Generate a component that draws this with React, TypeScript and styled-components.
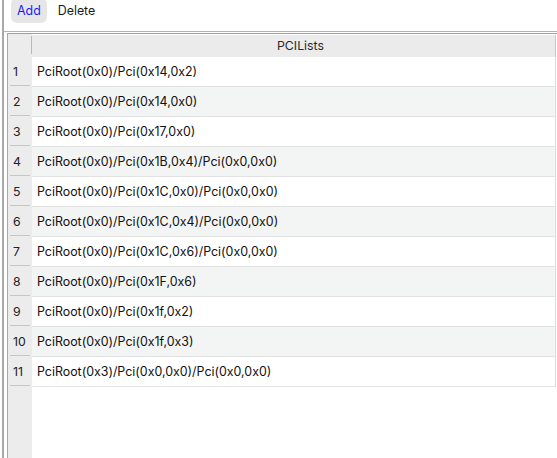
import React from "react";
import styled, { createGlobalStyle } from "styled-components";

const Global = createGlobalStyle`
  html, body { margin: 0; padding: 0; background: #ffffff; }
  body { width: 557px; height: 458px; overflow: hidden; font-family: Inter, "Noto Sans", sans-serif; }
  #root { height: 100%; }
`;

const Page = styled.div`
  height: 458px;
  padding-left: 2px;
  box-sizing: border-box;
`;

const Frame = styled.div`
  height: 100%;
  border-left: 2px solid #a9a9a9;
  display: flex;
  flex-direction: column;
  box-sizing: border-box;
`;

const Toolbar = styled.div`
  height: 32px;
  box-sizing: border-box;
  border-bottom: 1px solid #b4b4b4;
  display: flex;
  align-items: flex-start;
  gap: 5px;
  padding-left: 7px;
`;

const ToolButton = styled.button<{ $active?: boolean }>`
  height: 25px;
  margin-top: -2px;
  padding: 1px 6px 0;
  border: none;
  border-radius: 6px;
  background: ${(p) => (p.$active ? "#e6e6e6" : "transparent")};
  color: ${(p) => (p.$active ? "#1a1aff" : "#1a1a1a")};
  font-family: Inter, "Noto Sans", sans-serif;
  font-size: 12.4px;
  line-height: 20px;
  cursor: default;
`;

const TableArea = styled.div`
  flex: 1;
  margin-top: 1px;
  margin-left: 3px;
  border-left: 1px solid #a9a9a9;
  border-top: 1px solid #a0a0a0;
  display: flex;
  min-height: 0;
`;

const NumberColumn = styled.div`
  width: 24px;
  background: #ececec;
  display: flex;
  flex-direction: column;
`;

const CornerCell = styled.div`
  height: 22px;
  position: relative;
  &::after {
    content: "";
    position: absolute;
    right: 0;
    top: 2px;
    bottom: 2px;
    width: 1px;
    background: #b9b9b9;
  }
`;

const NumberCell = styled.div`
  height: 30px;
  box-sizing: border-box;
  padding-left: 5px;
  display: flex;
  align-items: center;
  font-size: 12.3px;
  color: #222;
  position: relative;
  &::after {
    content: "";
    position: absolute;
    left: 2px;
    right: 2px;
    bottom: 0;
    height: 1px;
    background: #c6c6c6;
  }
`;

const DataColumn = styled.div`
  width: 524px;
  display: flex;
  flex-direction: column;
`;

const HeaderCell = styled.div`
  height: 22px;
  background: #ebebeb;
  border-right: 1px solid #c8c8c8;
  margin-top: 1px;
  box-sizing: border-box;
  display: flex;
  align-items: center;
  justify-content: center;
  padding-left: 14px;
  padding-bottom: 1px;
  font-size: 12.3px;
  color: #2a2a2a;
`;

const DataRow = styled.div<{ $alt: boolean }>`
  height: 30px;
  box-sizing: border-box;
  background: ${(p) => (p.$alt ? "#f3f4f4" : "#ffffff")};
  border-bottom: 1px solid #e2e2e2;
  border-right: 1px solid #dcdcdc;
  padding-left: 5px;
  display: flex;
  align-items: center;
  font-size: 12.4px;
  color: #111;
`;

const rows = [
  "PciRoot(0x0)/Pci(0x14,0x2)",
  "PciRoot(0x0)/Pci(0x14,0x0)",
  "PciRoot(0x0)/Pci(0x17,0x0)",
  "PciRoot(0x0)/Pci(0x1B,0x4)/Pci(0x0,0x0)",
  "PciRoot(0x0)/Pci(0x1C,0x0)/Pci(0x0,0x0)",
  "PciRoot(0x0)/Pci(0x1C,0x4)/Pci(0x0,0x0)",
  "PciRoot(0x0)/Pci(0x1C,0x6)/Pci(0x0,0x0)",
  "PciRoot(0x0)/Pci(0x1F,0x6)",
  "PciRoot(0x0)/Pci(0x1f,0x2)",
  "PciRoot(0x0)/Pci(0x1f,0x3)",
  "PciRoot(0x3)/Pci(0x0,0x0)/Pci(0x0,0x0)",
];

export default function App() {
  return (
    <>
      <Global />
      <Page>
        <Frame>
          <Toolbar>
            <ToolButton $active>Add</ToolButton>
            <ToolButton>Delete</ToolButton>
          </Toolbar>
          <TableArea>
            <NumberColumn>
              <CornerCell />
              {rows.map((_, i) => (
                <NumberCell key={i}>{i + 1}</NumberCell>
              ))}
            </NumberColumn>
            <DataColumn>
              <HeaderCell>PCILists</HeaderCell>
              {rows.map((r, i) => (
                <DataRow key={i} $alt={i % 2 === 1}>
                  {r}
                </DataRow>
              ))}
            </DataColumn>
          </TableArea>
        </Frame>
      </Page>
    </>
  );
}
